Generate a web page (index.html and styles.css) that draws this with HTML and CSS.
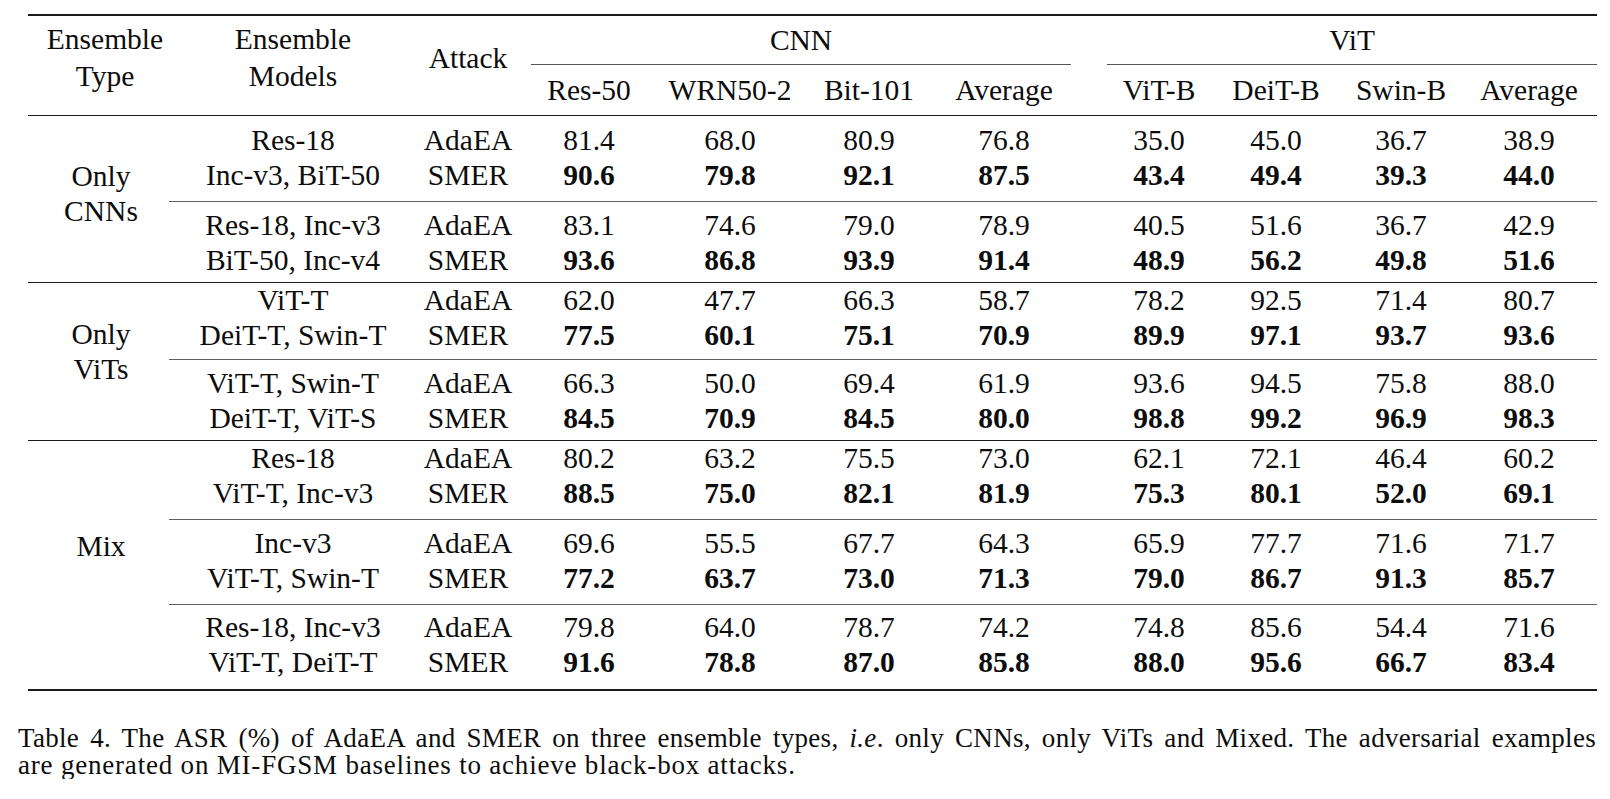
FILE: index.html
```html
<!DOCTYPE html>
<html lang="en">
<head>
<meta charset="utf-8">
<title>Table 4 – ASR of AdaEA and SMER</title>
<link rel="stylesheet" href="styles.css">
</head>
<body>
<div class="page">
  <table class="results">
    <colgroup>
      <col class="c-type"><col class="c-models"><col class="c-attack">
      <col class="c-res"><col class="c-wrn"><col class="c-bit"><col class="c-avg1">
      <col class="c-gap">
      <col class="c-vitb"><col class="c-deit"><col class="c-swin"><col class="c-avg2">
    </colgroup>
    <thead>
      <tr class="h1">
        <th rowspan="2" class="span2 type-head">Ensemble<br>Type</th>
        <th rowspan="2" class="span2 models-head">Ensemble<br>Models</th>
        <th rowspan="2" class="span2 attack-head">Attack</th>
        <th colspan="4" class="group cnn"><div class="group-label">CNN</div></th>
        <th rowspan="2" class="span2"></th>
        <th colspan="4" class="group vit"><div class="group-label">ViT</div></th>
      </tr>
      <tr class="h2">
        <th>Res-50</th><th>WRN50-2</th><th>Bit-101</th><th>Average</th>
        <th>ViT-B</th><th>DeiT-B</th><th>Swin-B</th><th>Average</th>
      </tr>
    </thead>
    <tbody>
      <!-- Only CNNs -->
      <tr class="first pt-7">
        <td rowspan="4" class="type mr-cnn">Only<br>CNNs</td>
        <td>Res-18</td><td>AdaEA</td>
        <td>81.4</td><td>68.0</td><td>80.9</td><td>76.8</td><td></td>
        <td>35.0</td><td>45.0</td><td>36.7</td><td>38.9</td>
      </tr>
      <tr class="smer pb-8">
        <td>Inc-v3, BiT-50</td><td>SMER</td>
        <td class="num">90.6</td><td class="num">79.8</td><td class="num">92.1</td><td class="num">87.5</td><td></td>
        <td class="num">43.4</td><td class="num">49.4</td><td class="num">39.3</td><td class="num">44.0</td>
      </tr>
      <tr class="first partial pt-6">
        <td>Res-18, Inc-v3</td><td>AdaEA</td>
        <td>83.1</td><td>74.6</td><td>79.0</td><td>78.9</td><td></td>
        <td>40.5</td><td>51.6</td><td>36.7</td><td>42.9</td>
      </tr>
      <tr class="smer pb-4">
        <td>BiT-50, Inc-v4</td><td>SMER</td>
        <td class="num">93.6</td><td class="num">86.8</td><td class="num">93.9</td><td class="num">91.4</td><td></td>
        <td class="num">48.9</td><td class="num">56.2</td><td class="num">49.8</td><td class="num">51.6</td>
      </tr>

      <!-- Only ViTs -->
      <tr class="first full pt-0">
        <td rowspan="4" class="type mr-vit">Only<br>ViTs</td>
        <td>ViT-T</td><td>AdaEA</td>
        <td>62.0</td><td>47.7</td><td>66.3</td><td>58.7</td><td></td>
        <td>78.2</td><td>92.5</td><td>71.4</td><td>80.7</td>
      </tr>
      <tr class="smer pb-6">
        <td>DeiT-T, Swin-T</td><td>SMER</td>
        <td class="num">77.5</td><td class="num">60.1</td><td class="num">75.1</td><td class="num">70.9</td><td></td>
        <td class="num">89.9</td><td class="num">97.1</td><td class="num">93.7</td><td class="num">93.6</td>
      </tr>
      <tr class="first partial pt-6">
        <td>ViT-T, Swin-T</td><td>AdaEA</td>
        <td>66.3</td><td>50.0</td><td>69.4</td><td>61.9</td><td></td>
        <td>93.6</td><td>94.5</td><td>75.8</td><td>88.0</td>
      </tr>
      <tr class="smer pb-4">
        <td>DeiT-T, ViT-S</td><td>SMER</td>
        <td class="num">84.5</td><td class="num">70.9</td><td class="num">84.5</td><td class="num">80.0</td><td></td>
        <td class="num">98.8</td><td class="num">99.2</td><td class="num">96.9</td><td class="num">98.3</td>
      </tr>

      <!-- Mix -->
      <tr class="first full pt-0">
        <td rowspan="6" class="type mr-mix">Mix</td>
        <td>Res-18</td><td>AdaEA</td>
        <td>80.2</td><td>63.2</td><td>75.5</td><td>73.0</td><td></td>
        <td>62.1</td><td>72.1</td><td>46.4</td><td>60.2</td>
      </tr>
      <tr class="smer pb-8">
        <td>ViT-T, Inc-v3</td><td>SMER</td>
        <td class="num">88.5</td><td class="num">75.0</td><td class="num">82.1</td><td class="num">81.9</td><td></td>
        <td class="num">75.3</td><td class="num">80.1</td><td class="num">52.0</td><td class="num">69.1</td>
      </tr>
      <tr class="first partial pt-6">
        <td>Inc-v3</td><td>AdaEA</td>
        <td>69.6</td><td>55.5</td><td>67.7</td><td>64.3</td><td></td>
        <td>65.9</td><td>77.7</td><td>71.6</td><td>71.7</td>
      </tr>
      <tr class="smer pb-8">
        <td>ViT-T, Swin-T</td><td>SMER</td>
        <td class="num">77.2</td><td class="num">63.7</td><td class="num">73.0</td><td class="num">71.3</td><td></td>
        <td class="num">79.0</td><td class="num">86.7</td><td class="num">91.3</td><td class="num">85.7</td>
      </tr>
      <tr class="first partial pt-5">
        <td>Res-18, Inc-v3</td><td>AdaEA</td>
        <td>79.8</td><td>64.0</td><td>78.7</td><td>74.2</td><td></td>
        <td>74.8</td><td>85.6</td><td>54.4</td><td>71.6</td>
      </tr>
      <tr class="smer pb-9 last">
        <td>ViT-T, DeiT-T</td><td>SMER</td>
        <td class="num">91.6</td><td class="num">78.8</td><td class="num">87.0</td><td class="num">85.8</td><td></td>
        <td class="num">88.0</td><td class="num">95.6</td><td class="num">66.7</td><td class="num">83.4</td>
      </tr>
    </tbody>
  </table>

  <div class="caption">
    <div class="cap-line cap-full">Table 4. The ASR (%) of AdaEA and SMER on three ensemble types, <i>i.e</i>. only CNNs, only ViTs and Mixed. The adversarial examples</div>
    <div class="cap-line">are generated on MI-FGSM baselines to achieve black-box attacks.</div>
  </div>
</div>
</body>
</html>
```

FILE: styles.css
```css
html, body {
  margin: 0;
  padding: 0;
  background: #ffffff;
}

body {
  color: #0d0d0d;
  font-family: "Liberation Serif", "Times New Roman", serif;
}

.page {
  padding: 14px 0 0 18px;
}

/* ---------- table ---------- */
.results {
  border-collapse: separate;
  border-spacing: 0;
  table-layout: fixed;
  width: 1569px;
  margin-left: 10px;
  font-size: 29.5px;
}

.c-type  { width: 141px; }
.c-models{ width: 248px; }
.c-attack{ width: 102px; }
.c-res   { width: 140px; }
.c-wrn   { width: 142px; }
.c-bit   { width: 136px; }
.c-avg1  { width: 134px; }
.c-gap   { width: 36px; }
.c-vitb  { width: 104px; }
.c-deit  { width: 130px; }
.c-swin  { width: 120px; }
.c-avg2  { width: 136px; }

.results th,
.results td {
  padding: 0;
  text-align: center;
  white-space: nowrap;
}

.results th {
  font-weight: normal;
}

/* header */
.h1 th {
  border-top: 2px solid #1a1a1a;
}

.span2 {
  vertical-align: top;
  line-height: 37px;
  border-bottom: 1px solid #1a1a1a;
}

.type-head   { padding: 5px 0 0 13px !important; }
.models-head { padding-top: 5px !important; }
.attack-head { padding-top: 24px !important; }

.group {
  vertical-align: top;
}

.group-label {
  line-height: 48px;
  border-bottom: 1px solid #555555;
}

.cnn .group-label {
  margin-left: 12px;
}

.h2 th {
  height: 50px;
  line-height: 50px;
  vertical-align: middle;
  border-bottom: 1px solid #1a1a1a;
}

/* body */
.results td {
  line-height: 35px;
  vertical-align: top;
}

.partial td {
  border-top: 1px solid #5f5f5f;
}

.full td {
  border-top: 1px solid #1a1a1a;
}

.pt-0 td { padding-top: 0; }
.pt-5 td { padding-top: 5px; }
.pt-6 td { padding-top: 6px; }
.pt-7 td { padding-top: 7px; }

.pb-4 td { padding-bottom: 4px; }
.pb-6 td { padding-bottom: 6px; }
.pb-8 td { padding-bottom: 8px; }
.pb-9 td { padding-bottom: 9px; }

.last td {
  border-bottom: 2px solid #1a1a1a;
}

.smer .num {
  font-weight: bold;
}

/* multirow type cells */
.results td.type {
  padding-left: 5px;
  padding-bottom: 0;
  border-bottom: 2px solid #1a1a1a;
}

.results td.mr-cnn { padding-top: 43px; border-bottom: none; }
.results td.mr-vit { padding-top: 34px; border-bottom: none; }
.results td.mr-mix { padding-top: 88px; }

/* ---------- caption ---------- */
.caption {
  width: 1578px;
  margin-top: 34px;
  font-size: 27px;
  line-height: 27px;
}

.cap-line {
  white-space: nowrap;
  letter-spacing: 0.8px;
}

.cap-full {
  text-align: justify;
  text-align-last: justify;
  white-space: normal;
  letter-spacing: 0.3px;
}
```
